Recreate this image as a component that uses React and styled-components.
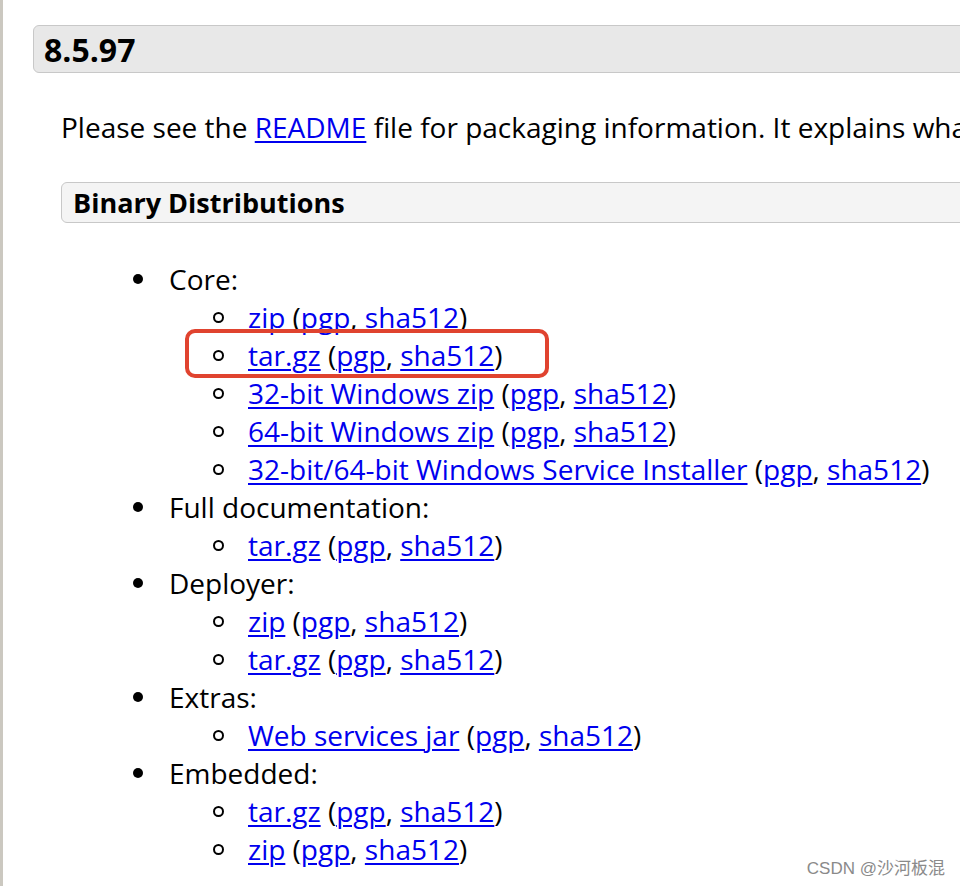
import React from 'react';
import styled, { createGlobalStyle, css } from 'styled-components';

const Global = createGlobalStyle`
  html, body {
    margin: 0;
    padding: 0;
    background: #fff;
    overflow: hidden;
  }
  body {
    font-family: "Open Sans", "Noto Sans", sans-serif;
    color: #000;
  }
`;

const Page = styled.div`
  position: relative;
  min-height: 886px;
  border-left: 3px solid #cbc8c0;
  box-sizing: border-box;
  width: 1100px;
`;

const Section = styled.div`
  padding: 25px 0 0 30px;
`;

const VersionTitle = styled.h2`
  margin: 0;
  height: 48px;
  box-sizing: border-box;
  background: #e8e8e8;
  border: 1px solid #c8c8c8;
  border-radius: 6px;
  padding-left: 10px;
  font-size: 32px;
  font-weight: 700;
  line-height: 47px;
`;

const Body = styled.div`
  padding-left: 28px;
`;

const Para = styled.p`
  margin: 35px 0 0;
  font-size: 28px;
  line-height: 38px;
  white-space: nowrap;
`;

const SubTitle = styled.h3`
  margin: 36px 0 0;
  height: 41px;
  box-sizing: border-box;
  background: #f4f4f4;
  border: 1px solid #c8c8c8;
  border-radius: 6px;
  padding-left: 11px;
  font-size: 27px;
  font-weight: 700;
  line-height: 39px;
`;

const Link = styled.a`
  color: #0000ee;
  text-decoration: underline;
  text-underline-offset: 3px;
  text-decoration-thickness: 2px;
`;

const List = styled.ul`
  margin: ${p => (p.$nested ? '0' : '37px 0 0')};
  padding-left: ${p => (p.$nested ? '79px' : '108px')};
  list-style: none;
  font-size: 28px;
  line-height: 38px;
`;

const Item = styled.li`
  position: relative;
  white-space: nowrap;

  &::before {
    content: "";
    position: absolute;
    box-sizing: border-box;
    border-radius: 50%;
    ${p =>
      p.$sub
        ? css`
            left: -35px;
            top: 14px;
            width: 11px;
            height: 11px;
            border: 2px solid #000;
          `
        : css`
            left: -36px;
            top: 14px;
            width: 10px;
            height: 10px;
            background: #000;
          `}
  }
`;

const Highlight = styled.span`
  position: absolute;
  left: -63px;
  top: -7px;
  width: 364px;
  height: 49px;
  box-sizing: border-box;
  border: 4px solid #e0432f;
  border-radius: 10px;
  pointer-events: none;
`;

const Watermark = styled.div`
  position: absolute;
  right: 155px;
  bottom: 7px;
  font-family: "Liberation Sans", "Noto Sans CJK SC", sans-serif;
  font-size: 17px;
  color: #8a8a8a;
`;

const Sigs = () => (
  <>
    {' ('}<Link href="#">pgp</Link>, <Link href="#">sha512</Link>{')'}
  </>
);

const File = ({ name, marked }) => (
  <Item $sub>
    {marked && <Highlight />}
    <Link href="#">{name}</Link>
    <Sigs />
  </Item>
);

const groups = [
  { title: 'Core:', files: ['zip', 'tar.gz', '32-bit Windows zip', '64-bit Windows zip', '32-bit/64-bit Windows Service Installer'] },
  { title: 'Full documentation:', files: ['tar.gz'] },
  { title: 'Deployer:', files: ['zip', 'tar.gz'] },
  { title: 'Extras:', files: ['Web services jar'] },
  { title: 'Embedded:', files: ['tar.gz', 'zip'] },
];

export default function App() {
  return (
    <>
      <Global />
      <Page>
        <Section>
          <VersionTitle>8.5.97</VersionTitle>
          <Body>
            <Para>
              Please see the <Link href="#">README</Link> file for packaging information. It explains what every distribution contains.
            </Para>
            <SubTitle>Binary Distributions</SubTitle>
            <List>
              {groups.map((g, gi) => (
                <Item key={g.title}>
                  {g.title}
                  <List $nested>
                    {g.files.map((f, fi) => (
                      <File key={f + fi} name={f} marked={gi === 0 && fi === 1} />
                    ))}
                  </List>
                </Item>
              ))}
            </List>
          </Body>
        </Section>
        <Watermark>CSDN @沙河板混</Watermark>
      </Page>
    </>
  );
}
